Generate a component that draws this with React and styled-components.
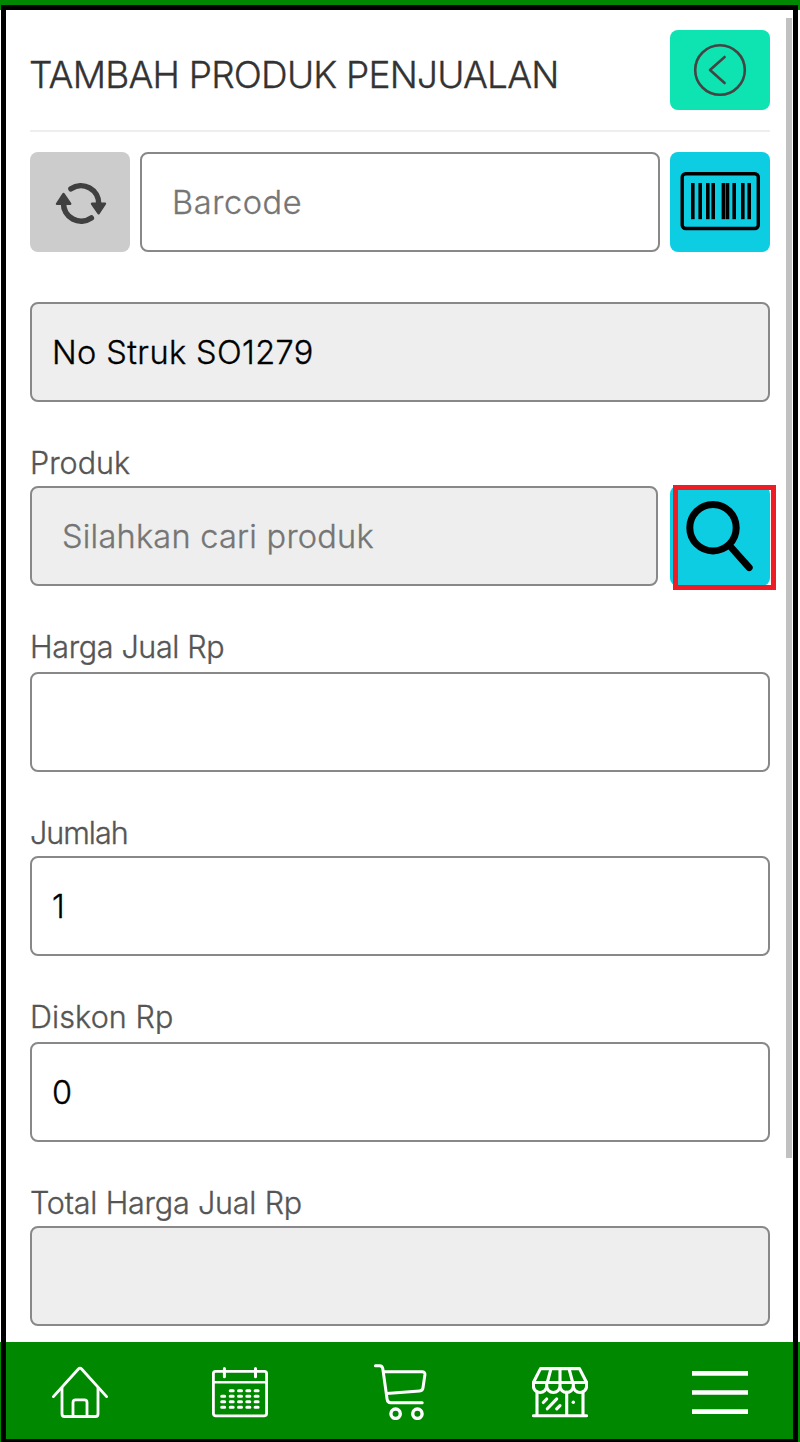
import React from "react";
import styled, { createGlobalStyle } from "styled-components";

const GlobalStyle = createGlobalStyle`
  * { box-sizing: border-box; }
  body {
    margin: 0;
    background: #fff;
    font-family: Inter, "Liberation Sans", sans-serif;
    font-weight: 300;
    -webkit-text-stroke: 0.35px currentColor;
  }
`;

const Screen = styled.div`
  position: relative;
  display: flex;
  flex-direction: column;
  width: 800px;
  height: 1442px;
  overflow: hidden;
  background: #fff;
`;

const TopBar = styled.div`
  flex: none;
  height: 10px;
  background: #008800;
`;

const Content = styled.main`
  flex: 1;
  min-height: 0;
  padding: 20px 30px 0;
`;

const Header = styled.header`
  display: flex;
  justify-content: space-between;
  height: 102px;
  margin-bottom: 20px;
  border-bottom: 2px solid #eee;
`;

const Title = styled.h1`
  margin: 0 0 0 -1px;
  padding-top: 20px;
  font-size: 37px;
  font-weight: 300;
  line-height: 50px;
  letter-spacing: ${(p) => p.$spacing}px;
  white-space: nowrap;
  color: #333;
`;

const Row = styled.div`
  display: flex;
  gap: ${(p) => p.$gap || 10}px;
`;

const Button = styled.button`
  flex: none;
  display: flex;
  align-items: center;
  justify-content: center;
  width: 100px;
  height: ${(p) => p.$height || 100}px;
  padding: 0;
  border: 0;
  border-radius: 8px;
  background: ${(p) => p.$color};
`;

const Field = styled.div`
  flex: 1;
  height: 100px;
  padding: 1px ${(p) => (p.$inset ? 30 : 20)}px 0;
  border: 2px solid #888;
  border-radius: 8px;
  background: ${(p) => (p.$readOnly ? "#eee" : "#fff")};
  color: ${(p) => (p.$placeholder ? "#757575" : "#000")};
  font-size: 32.5px;
  line-height: 96px;
  letter-spacing: ${(p) => p.$spacing || 0}px;
  white-space: nowrap;
`;

const Receipt = styled.div`
  display: flex;
  margin-top: 50px;
`;

const Label = styled.div`
  height: ${(p) => p.$height}px;
  padding-top: 41px;
  font-size: 30.5px;
  line-height: 40px;
  letter-spacing: ${(p) => p.$spacing || 0}px;
  color: #555;
  white-space: nowrap;
`;

const SearchWrap = styled.div`
  position: relative;
  display: flex;
`;

const Highlight = styled.div`
  position: absolute;
  left: 3px;
  top: -1px;
  width: 103px;
  height: 105px;
  border: 5px solid #ee1c25;
`;

const Nav = styled.nav`
  flex: none;
  display: flex;
  height: 100px;
  background: #008800;
`;

const NavItem = styled.a`
  flex: 1;
  display: flex;
  align-items: center;
  justify-content: center;
`;

const NavSvg = styled.svg`
  width: 56px;
  height: 56px;
  fill: none;
  stroke: #fff;
  stroke-width: ${(p) => p.$weight || 2.8};
  stroke-linecap: round;
  stroke-linejoin: round;
`;

const ScrollThumb = styled.div`
  position: absolute;
  left: 786px;
  top: 18px;
  width: 6px;
  height: 1140px;
  background: #c1c1c1;
`;

const Frame = styled.div`
  position: absolute;
  left: 1px;
  top: 5px;
  width: 797px;
  height: 1439px;
  border: 5px solid #000;
  pointer-events: none;
`;

const BackIcon = () => (
  <svg width="100" height="80" fill="none" stroke="#444" strokeWidth="2.6" strokeLinecap="round" strokeLinejoin="round">
    <circle cx="50" cy="40" r="24.8" />
    <path d="M54.6 27 40 40l14.6 13" />
  </svg>
);

const RefreshIcon = () => (
  <svg width="100" height="100" fill="none" stroke="#404040" strokeWidth="5.6" strokeLinecap="round">
    <path d="M41 36.8A17.7 17.7 0 0 1 68.7 52" />
    <path d="M61.3 66A17.7 17.7 0 0 1 33.5 51" />
    <path d="M62 51.7h13l-6.4 9.6z M27 51.8h13.2l-6.7-9.8z" fill="#404040" strokeWidth="2.4" strokeLinejoin="round" />
  </svg>
);

const bars = [21, 28.4, 36, 41.4, 51.6, 55.7, 62.4, 71, 77.4];
const BarcodeIcon = () => (
  <svg width="100" height="100">
    <rect x="12.2" y="21.8" width="76.1" height="54.7" rx="3.5" fill="none" stroke="#000" strokeWidth="3.4" />
    {bars.map((x) => (
      <rect key={x} x={x} y="31" width="3.6" height="36.2" />
    ))}
  </svg>
);

const SearchIcon = () => (
  <svg width="100" height="100" fill="none" stroke="#000" strokeWidth="7" strokeLinecap="round">
    <circle cx="43" cy="41.7" r="23.2" />
    <path d="M59.5 59.5 79.2 81.6" />
  </svg>
);

const HomeIcon = () => (
  <NavSvg viewBox="0 0 56 56">
    <path d="M1.4 32.6 26.4 5q1.6-1.8 3.2 0l25 27.6" />
    <path d="M10 24v26q0 2.5 2.5 2.5h31q2.5 0 2.5-2.5V24" />
    <path d="M21 52V38.4q0-2.6 2.6-2.6h8.8q2.6 0 2.6 2.6V52" />
  </NavSvg>
);

const CalendarIcon = () => (
  <NavSvg viewBox="0 0 56 56">
    <rect x="1.4" y="7.4" width="53.2" height="44.4" rx="2.2" />
    <path d="M1.4 18.2h53.2" strokeWidth="2.4" />
    <path d="M12.4 4.4v8.4M43.5 4.4v8.4" strokeWidth="3" />
    <path
      d="M18.2 26.7h3m5.3 0h3m5.3 0h3m5.3 0h3M9.7 32.3h3m5.5 0h3m5.3 0h3m5.3 0h3m5.3 0h3M9.7 37.7h3m5.5 0h3m5.3 0h3m5.3 0h3m5.3 0h3M9.7 43.3h3m5.5 0h3m5.3 0h3m5.3 0h3m5.3 0h3"
      strokeWidth="3"
    />
  </NavSvg>
);

const CartIcon = () => (
  <NavSvg viewBox="0 0 56 56" $weight={3}>
    <path d="M3.4 1.7h4.2q2.7 0 3.2 3l4.3 30.6q.5 3.4 3.5 3.4h31.6" />
    <path d="M11.5 7.7h38.5q3.2 0 2.9 3l-1.9 13q-.4 2.9-3.4 3.2L14.8 29.5" />
    <circle cx="23.6" cy="49.7" r="4.7" strokeWidth="3.4" />
    <circle cx="45.4" cy="49.7" r="4.7" strokeWidth="3.4" />
  </NavSvg>
);

const StoreIcon = () => (
  <NavSvg viewBox="0 0 56 56" $weight={3.1}>
    <path d="M8.5 4.6h39l7.1 13.9H1.4z M19 4.6 15.3 18.5M28 4.6v14M37 4.6 40.7 18.5" />
    <path d="M1.4 18.5v3.6a6.65 6.4 0 0 0 13.3 0a6.65 6.4 0 0 0 13.3 0a6.65 6.4 0 0 0 13.3 0a6.65 6.4 0 0 0 13.3 0v-3.6M14.7 18.5v3.6M28 18.5v3.6M41.3 18.5v3.6" />
    <path d="M5 28v23.5M51 28v23.5M34.7 28v23.5M1.4 51.7h53.2" />
    <path d="M11.3 38.5 14.7 35M15.3 44.8 24.7 34.9M24.7 44.9 28 41.6" />
    <circle cx="41.3" cy="38.3" r="1.7" fill="#fff" stroke="none" />
  </NavSvg>
);

const MenuIcon = () => (
  <NavSvg viewBox="0 0 56 56">
    <path d="M0 9.3h56M0 28.5h56M0 47.7h56" strokeWidth="4.7" strokeLinecap="butt" />
  </NavSvg>
);

const navIcons = [HomeIcon, CalendarIcon, CartIcon, StoreIcon, MenuIcon];

export default function App() {
  return (
    <Screen>
      <GlobalStyle />
      <TopBar />
      <Content>
        <Header>
          <Title $spacing={-0.8}>TAMBAH PRODUK PENJUALAN</Title>
          <Button $color="#0de4b1" $height={80} aria-label="Kembali"><BackIcon /></Button>
        </Header>
        <Row>
          <Button $color="#ccc" aria-label="Refresh"><RefreshIcon /></Button>
          <Field $inset $placeholder $spacing={0.6}>Barcode</Field>
          <Button $color="#0dcde3" aria-label="Scan"><BarcodeIcon /></Button>
        </Row>
        <Receipt>
          <Field $readOnly $spacing={0.4}>No Struk SO1279</Field>
        </Receipt>
        <Label $height={84}>Produk</Label>
        <Row $gap={12}>
          <Field $inset $placeholder $readOnly $spacing={0.25}>Silahkan cari produk</Field>
          <SearchWrap>
            <Button $color="#0dcde3" aria-label="Cari"><SearchIcon /></Button>
            <Highlight />
          </SearchWrap>
        </Row>
        <Label $height={86} $spacing={-0.35}>Harga Jual Rp</Label>
        <Field />
        <Label $height={84} $spacing={-1}>Jumlah</Label>
        <Field>1</Field>
        <Label $height={86} $spacing={0.1}>Diskon Rp</Label>
        <Field>0</Field>
        <Label $height={84} $spacing={-0.2}>Total Harga Jual Rp</Label>
        <Field $readOnly />
      </Content>
      <Nav>
        {navIcons.map((Icon, i) => (
          <NavItem key={i}><Icon /></NavItem>
        ))}
      </Nav>
      <ScrollThumb />
      <Frame />
    </Screen>
  );
}
